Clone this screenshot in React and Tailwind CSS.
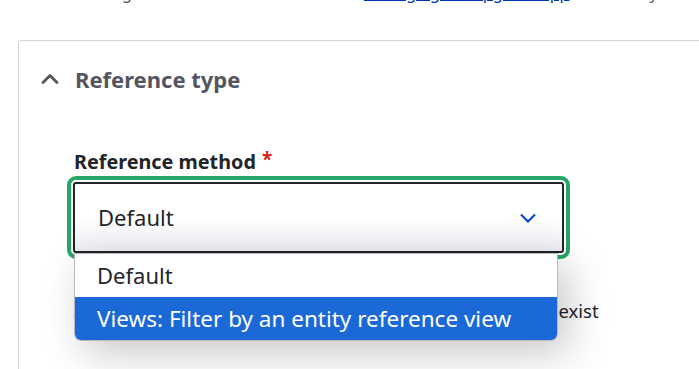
import { ChevronUp } from "lucide-react";

export default function App() {
  return (
    <div className="w-[699px] h-[369px] overflow-hidden bg-white font-['Noto_Sans',sans-serif] text-[#232429]">
      {/* cut-off description line above the card */}
      <div className="h-[6px] overflow-hidden">
        <div className="-mt-[19px] flex items-baseline text-[16px] leading-[24px] whitespace-nowrap text-[#55565b]">
          <span className="ml-[122px]">g</span>
          <a className="ml-[232px] text-[#0036b1] underline">Managing the upgrade app</a>
          <span className="ml-[80px]">y</span>
        </div>
      </div>

      {/* Details card */}
      <div className="ml-[18px] mt-[34px] w-[700px] h-[340px] border border-[#d3d4d9] rounded-tl-[3px] bg-white">
        <div className="flex items-center h-[74px] pl-[17px] pt-[2px]">
          <ChevronUp className="w-[28px] h-[28px] text-[#55565b]" strokeWidth={2.4} />
          <span className="ml-[11px] text-[22px] font-bold text-[#545560]">Reference type</span>
        </div>

        <div className="pl-[54px] pt-[33px]">
          <div className="flex items-start h-[28px] pl-[1px]">
            <span className="text-[19.8px] font-bold leading-[28px] text-[#232429]">Reference method</span>
            <span className="ml-[6px] text-[19px] font-bold leading-[22px] text-[#d72222]">*</span>
          </div>

          <div className="relative mt-[6px] w-[491px]">
            <div className="h-[71px] rounded-[3px] border-2 border-[#232429] bg-gradient-to-b from-white from-50% to-[#eceef3] outline-[4px] outline-solid outline-[#26a769] outline-offset-[2px] flex items-center justify-between pl-[23px] pr-[26px]">
              <span className="text-[22px] text-[#232429]">Default</span>
              <svg width="16" height="10" viewBox="0 0 16 10" fill="none">
                <path d="M1 1.5L8 8.5L15 1.5" stroke="#003ecc" strokeWidth="2" />
              </svg>
            </div>

            {/* description partly hidden by the open list */}
            <div className="mt-[46px] text-[18.5px] leading-[24px] whitespace-nowrap text-[#232429]">
              Select the method used to collect the items expected to exist
            </div>

            {/* open option list */}
            <div className="absolute left-[1px] top-[71px] w-[484px] rounded-b-[7px] bg-white overflow-hidden border border-[#b9b9bc] shadow-[10px_12px_40px_rgba(0,0,0,0.22)]">
              <div className="h-[43px] flex items-center pl-[22px] text-[22px] text-[#232429]">Default</div>
              <div className="h-[43px] flex items-center pl-[22px] text-[22.5px] text-white bg-[#1b68d7]">
                Views: Filter by an entity reference view
              </div>
            </div>
          </div>
        </div>
      </div>
    </div>
  );
}
